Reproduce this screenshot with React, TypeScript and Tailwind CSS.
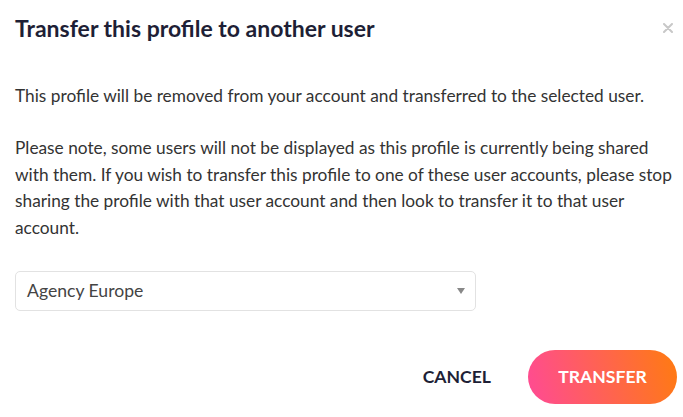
import React from "react";

export default function App() {
  return (
    <div className="w-[683px] h-[417px] bg-white overflow-hidden" style={{ fontFamily: "Lato, 'Noto Sans', sans-serif" }}>
      <div className="flex items-start justify-between pl-[15px] pr-[8px] pt-[12px]">
        <h1 className="text-[23px] leading-[32px] font-bold text-[#1e1f36]">Transfer this profile to another user</h1>
        <button className="mt-[9px] w-[14px] h-[14px] flex items-center justify-center text-[#c8c8c8]">
          <svg width="10" height="10" viewBox="0 0 10 10"><path d="M1 1L9 9M9 1L1 9" stroke="currentColor" strokeWidth="2" strokeLinecap="round" /></svg>
        </button>
      </div>
      <div className="pl-[15px] pr-[5px] pt-[39px] text-[17.3px] leading-[26.4px] text-[#333333]">
        <p>This profile will be removed from your account and transferred to the selected user.</p>
        <p className="mt-[26px]">Please note, some users will not be displayed as this profile is currently being shared with them. If you wish to transfer this profile to one of these user accounts, please stop sharing the profile with that user account and then look to transfer it to that user account.</p>
        <div className="mt-[30px] w-[461px] h-[40px] border border-[#e2e2e2] rounded-[5px] flex items-center justify-between pl-[11px] pr-[10px]">
          <span className="text-[17.6px] text-[#444444]">Agency Europe</span>
          <svg width="8" height="6" viewBox="0 0 8 6"><path d="M0 0H8L4 6Z" fill="#888888" /></svg>
        </div>
      </div>
      <div className="flex justify-end items-center pr-[6px] pt-[39px] gap-[37px]">
        <button className="text-[17.6px] font-bold text-[#1e1f36] uppercase">Cancel</button>
        <button className="w-[149px] h-[54px] rounded-full text-white text-[17.6px] font-bold uppercase bg-[linear-gradient(75deg,#ff4a95,#ff7b10)]">Transfer</button>
      </div>
    </div>
  );
}
